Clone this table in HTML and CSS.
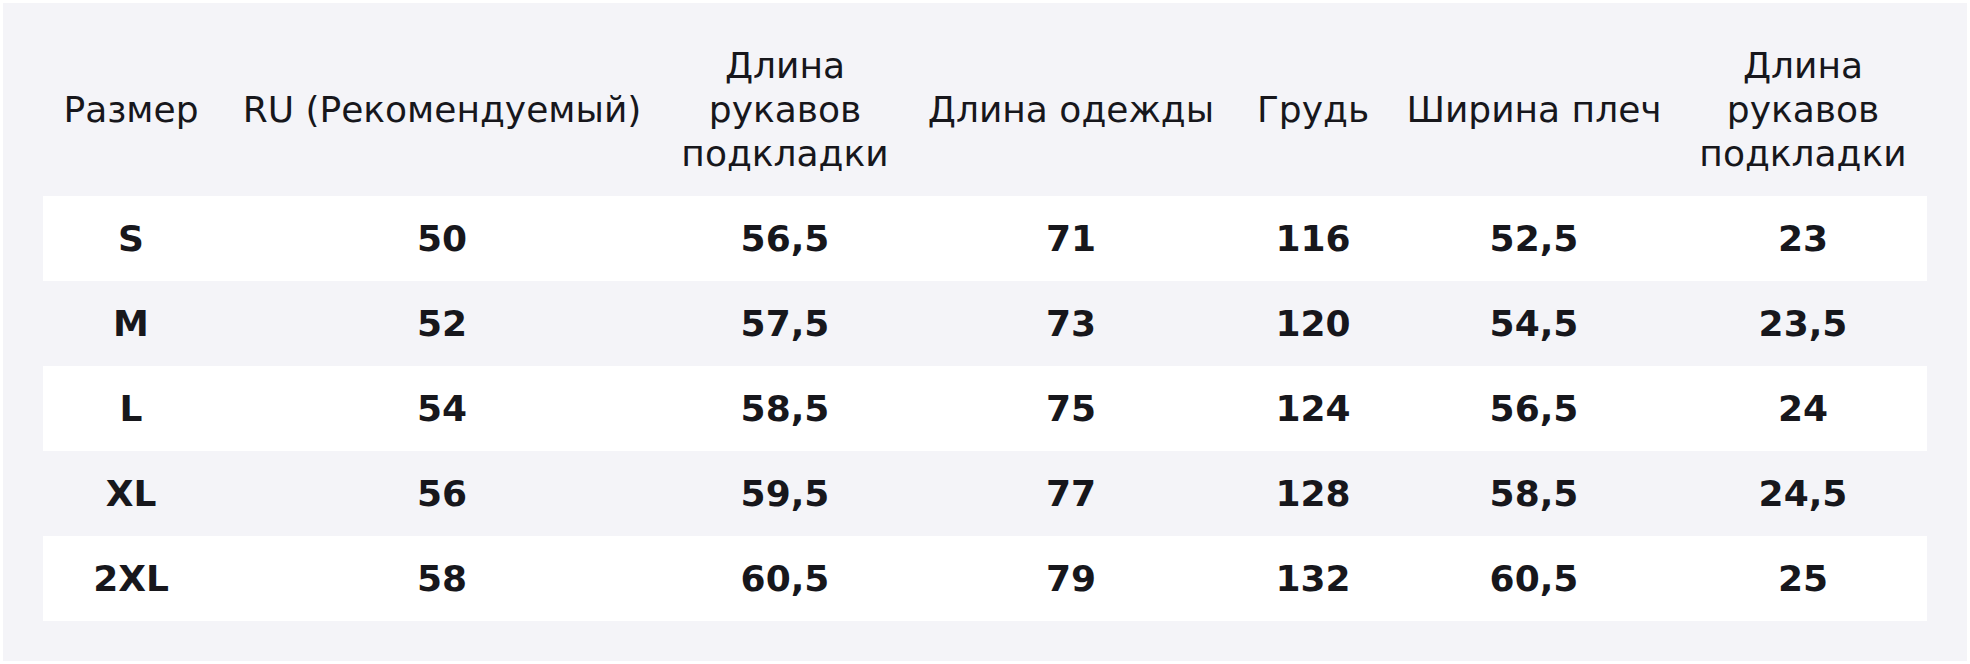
FILE: index.html
```html
<!DOCTYPE html>
<html lang="ru">
<head>
<meta charset="utf-8">
<title>Таблица размеров</title>
<link rel="stylesheet" href="styles.css">
</head>
<body>
<div class="sheet">
  <table class="sizes">
    <colgroup>
      <col class="c1"><col class="c2"><col class="c3"><col class="c4"><col class="c5"><col class="c6"><col class="c7">
    </colgroup>
    <thead>
      <tr>
        <th>Размер</th>
        <th>RU (Рекомендуемый)</th>
        <th>Длина рукавов подкладки</th>
        <th>Длина одежды</th>
        <th>Грудь</th>
        <th>Ширина плеч</th>
        <th>Длина рукавов подкладки</th>
      </tr>
    </thead>
    <tbody>
      <tr><td>S</td><td>50</td><td>56,5</td><td>71</td><td>116</td><td>52,5</td><td>23</td></tr>
      <tr><td>M</td><td>52</td><td>57,5</td><td>73</td><td>120</td><td>54,5</td><td>23,5</td></tr>
      <tr><td>L</td><td>54</td><td>58,5</td><td>75</td><td>124</td><td>56,5</td><td>24</td></tr>
      <tr><td>XL</td><td>56</td><td>59,5</td><td>77</td><td>128</td><td>58,5</td><td>24,5</td></tr>
      <tr><td>2XL</td><td>58</td><td>60,5</td><td>79</td><td>132</td><td>60,5</td><td>25</td></tr>
    </tbody>
  </table>
</div>
</body>
</html>
```
FILE: styles.css
```css
html, body {
  margin: 0;
  padding: 0;
  background: #ffffff;
}
body {
  padding: 3px;
  font-family: "DejaVu Sans", sans-serif;
  color: #17171c;
}
.sheet {
  background: #f4f4f8;
  padding: 21px 40px 40px 40px;
}
.sizes {
  width: 100%;
  border-collapse: collapse;
  border-spacing: 0;
  table-layout: fixed;
}
.c1 { width: 176px; }
.c2 { width: 446px; }
.c3 { width: 240px; }
.c4 { width: 332px; }
.c5 { width: 152px; }
.c6 { width: 290px; }
.c7 { width: 248px; }
.sizes th {
  font-weight: normal;
  font-size: 36px;
  line-height: 44px;
  padding: 20px 0;
  text-align: center;
  vertical-align: middle;
}
.sizes td {
  font-weight: bold;
  font-size: 36px;
  line-height: 45px;
  padding: 20px 0;
  text-align: center;
  vertical-align: middle;
}
.sizes tbody tr:nth-child(odd) {
  background: #ffffff;
}
```
